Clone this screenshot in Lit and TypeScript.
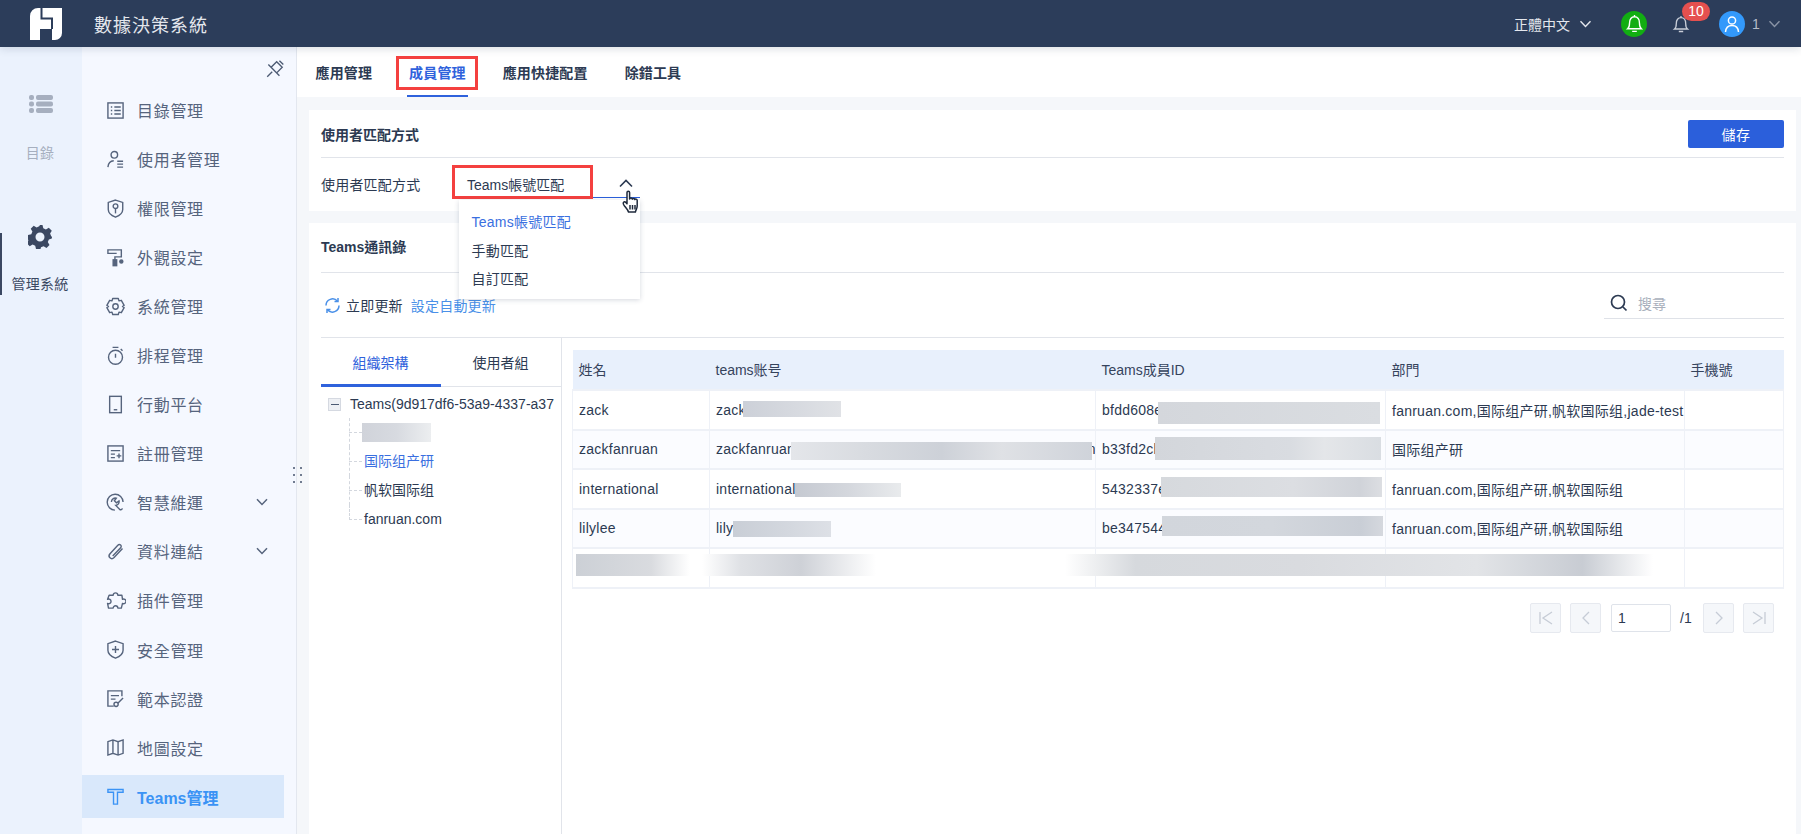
import { LitElement, css, html, svg } from 'lit';
import { customElement } from 'lit/decorators.js';

const navIcons: Record<string, unknown> = {
  list: svg`<rect x="2.5" y="2.5" width="13" height="13"/><path d="M5 6h1.2M8 6h5.5M5 9h1.2M8 9h5.5M5 12h1.2M8 12h5.5"/>`,
  user: svg`<circle cx="8" cy="5" r="2.8"/><path d="M2.5 15.5c.3-3.2 2.2-5.2 5-5.4M10.5 10.5h5M10.5 13h5M10.5 15.5h5"/>`,
  shield: svg`<path d="M9 1.8l6.2 2v6c0 3.2-2.8 5.2-6.2 6.6-3.4-1.4-6.2-3.4-6.2-6.6v-6z"/><circle cx="9" cy="7" r="2"/><path d="M9 9v4.2"/>`,
  paint: svg`<path d="M10 5.5H2.5v-3h11.5v6H8.5V11"/><rect x="7" y="11" width="3" height="5" fill="currentColor"/><circle cx="14" cy="12.5" r="1.3" fill="currentColor"/>`,
  gear: svg`<path stroke-linejoin="round" d="M6.6 2.2h4.8l.6 2 2-.5 2.4 4.3-1.4 1 1.4 1-2.4 4.3-2-.5-.6 2H6.6l-.6-2-2 .5L1.6 10 3 9 1.6 8 4 3.7l2 .5z"/><circle cx="9" cy="9" r="2.3"/>`,
  timer: svg`<circle cx="9" cy="10.5" r="6"/><path d="M9 7.5v3.5M6.5 2h5M13.5 3.5l1.5 1.5"/>`,
  phone: svg`<rect x="4" y="2" width="10" height="14"/><path d="M7.5 13.5h3"/>`,
  register: svg`<rect x="2.5" y="2.5" width="13" height="13"/><path d="M5 6.5h8M5 9.5h3.5M5 12.5h3.5M12 9v4M10 11h4"/>`,
  wrench: svg`<path d="M15.5 8.5A6.8 6.8 0 1 0 8.5 15.5"/><path d="M5.5 8.5a3.4 3.4 0 0 1 4.2-3.2L8 7.5l1.8 1.8 2.2-1.7a3.2 3.2 0 0 1-2.8 3.9l3.5 3.5c.6.6 2 0 2.2-1"/>`,
  clip: svg`<path d="M15 6.5l-7.2 7.7c-2.5 2.4-5.8-.7-3.5-3.3L11 3.6c1.6-1.6 3.9.6 2.4 2.2l-6.8 7"/>`,
  plugin: svg`<path d="M7 4.5a2 2 0 1 1 4 0h3.5l.5 3.5a2 2 0 1 1 0 3.5l-1 4H11a2 2 0 1 0-4 0H3l-.8-4a2 2 0 1 0 0-3.5L3.5 4.5z" stroke-linejoin="round"/>`,
  secure: svg`<path d="M9 1.8l6.5 2.2v5.6c0 3.4-2.8 5.4-6.5 6.8-3.7-1.4-6.5-3.4-6.5-6.8V4z"/><path d="M9 6v6M6 9h6"/>`,
  cert: svg`<path d="M14.5 7V2.5h-12v13h5M5 6.5h7M5 9.5h4"/><circle cx="9.5" cy="14" r="1.8"/><path d="M11 13l4.5-4.5"/>`,
  map: svg`<path d="M2.5 4l4.3-1.5 4.4 1.5 4.3-1.5v11.5l-4.3 1.5-4.4-1.5-4.3 1.5zM6.8 2.5v11.5M11.2 4v11.5"/>`,
  teams: svg`<path d="M2.5 3h13v2.4H10.7V15.5H7.3V5.4H2.5z"/>`,
};

const navItems = [
  { icon: 'list', label: '目錄管理' },
  { icon: 'user', label: '使用者管理' },
  { icon: 'shield', label: '權限管理' },
  { icon: 'paint', label: '外觀設定' },
  { icon: 'gear', label: '系統管理' },
  { icon: 'timer', label: '排程管理' },
  { icon: 'phone', label: '行動平台' },
  { icon: 'register', label: '註冊管理' },
  { icon: 'wrench', label: '智慧維運', more: true },
  { icon: 'clip', label: '資料連結', more: true },
  { icon: 'plugin', label: '插件管理' },
  { icon: 'secure', label: '安全管理' },
  { icon: 'cert', label: '範本認證' },
  { icon: 'map', label: '地圖設定' },
  { icon: 'teams', label: 'Teams管理', active: true },
];

const rows = [
  ['zack', 'zack0123456789', 'bfdd608e012345678901234567', 'fanruan.com,国际组产研,帆软国际组,jade-test'],
  ['zackfanruan', 'zackfanruan' + 'n'.repeat(36) + 'in', 'b33fd2cb012345678901234567', '国际组产研'],
  ['international', 'international', '5432337e012345678901234567', 'fanruan.com,国际组产研,帆软国际组'],
  ['lilylee', 'lily0123456789', 'be347544012345678901234567', 'fanruan.com,国际组产研,帆软国际组'],
  ['', '', '', ''],
];

// blurred-out patches over the table, relative to the table's top left corner
const patches = [
  { x: 171, y: 51, w: 98, h: 16, bg: 'linear-gradient(90deg,#ccd0d8,#d6d9df 50%,#e0e2e6)' },
  { x: 219, y: 92, w: 301, h: 18, bg: 'linear-gradient(90deg,#e4e6ea,#d8dbe0 25%,#cdd1d8 50%,#dfe1e5 70%,#cfd3da)' },
  { x: 223, y: 133, w: 106, h: 14, bg: 'linear-gradient(90deg,#c5c9d1,#d4d7dd 50%,#e9ebed)' },
  { x: 161, y: 171, w: 98, h: 16, bg: 'linear-gradient(90deg,#c9ced6,#d4d8df 60%,#dde0e6)' },
  { x: 586, y: 52, w: 222, h: 22, bg: 'linear-gradient(90deg,#d4d7dc,#dadde1)' },
  { x: 583, y: 87, w: 226, h: 23, bg: 'linear-gradient(90deg,#d3d6db,#d9dce1 60%,#e4e6e9 75%,#d9dde2)' },
  { x: 589, y: 127, w: 221, h: 20, bg: 'linear-gradient(90deg,#d6d9dd,#dcdee2 60%,#d0d3d9 90%,#dcdee2)' },
  { x: 590, y: 166, w: 221, h: 20, bg: 'linear-gradient(90deg,#d2d6dc,#d3d7dd 50%,#c9ced6 90%,#d5d8de)' },
  { x: 4, y: 204, w: 300, h: 22, bg: 'linear-gradient(90deg,#ccd0d6,#d9dbdf 25%,#fff 38%,#fff 42%,#dfe1e5 55%,#ced1d7 75%,#fff)' },
  { x: 493, y: 204, w: 588, h: 22, bg: 'linear-gradient(90deg,#fff,#d6d9dd 12%,#d9dbdf 40%,#e2e4e7 70%,#c8ccd3 88%,#fff)' },
];

@customElement('app-root')
export class AppRoot extends LitElement {
  static override styles = css`
    :host {
      display: block;
      height: 834px;
      overflow: hidden;
      font-family: 'Liberation Sans', 'Noto Sans CJK TC', sans-serif;
      font-size: 14px;
      color: #2c3a52;
    }
    svg {
      display: block;
      flex: none;
      fill: none;
      stroke: currentColor;
    }
    .topbar {
      position: relative;
      z-index: 3;
      height: 47px;
      display: flex;
      align-items: center;
      background: #2c3d5a;
      color: #e4e7ed;
      padding: 0 20px 0 30px;
      box-shadow: 0 2px 8px rgba(44, 61, 90, 0.16);
    }
    .logo {
      width: 32px;
      height: 32px;
      stroke: none;
    }
    .title {
      margin-left: 32px;
      font-size: 18px;
      letter-spacing: 1px;
    }
    .spacer {
      flex: 1;
    }
    .chev {
      width: 13px;
      height: 8px;
      stroke-width: 1.4;
      margin-left: 9px;
    }
    .green {
      width: 26px;
      height: 26px;
      border-radius: 50%;
      background: #12ae12;
      color: #fff;
      margin-left: 29px;
      display: flex;
      align-items: center;
      justify-content: center;
    }
    .bell {
      position: relative;
      margin-left: 25px;
      width: 17px;
      color: #c9ced8;
    }
    .badge {
      position: absolute;
      left: 10px;
      top: -13px;
      width: 28px;
      height: 19px;
      border-radius: 10px;
      background: #e5504f;
      color: #fff;
      font-size: 14px;
      line-height: 19px;
      text-align: center;
    }
    .avatar {
      width: 26px;
      height: 26px;
      border-radius: 50%;
      background: #3399fb;
      color: #fff;
      margin-left: 30px;
      display: flex;
      align-items: center;
      justify-content: center;
    }
    .uid {
      margin-left: 7px;
      width: 8px;
      color: #b4bbc8;
    }
    .uchev {
      margin-left: 8px;
      color: #8a94a6;
    }

    .layout {
      display: flex;
      height: 787px;
    }
    .rail {
      width: 82px;
      flex: none;
      background: #ebf2fd;
      display: flex;
      flex-direction: column;
      align-items: center;
    }
    .rail-item {
      position: relative;
      width: 100%;
      display: flex;
      flex-direction: column;
      align-items: center;
      line-height: 20px;
      letter-spacing: 0.2px;
    }
    .rail-item.dir {
      margin-top: 48px;
      color: #a6afbf;
    }
    .rail-item.dir span {
      margin-top: 30px;
      margin-right: 2px;
    }
    .rail-item.admin {
      margin-top: 62px;
      color: #3b4862;
    }
    .rail-item.admin svg {
      margin-right: 2px;
    }
    .rail-item.admin span {
      margin-top: 25px;
      margin-right: 2px;
    }
    .rail-item.admin::before {
      content: '';
      position: absolute;
      left: 0;
      top: 8px;
      width: 2px;
      height: 62px;
      background: #3b4862;
    }
    .nav {
      position: relative;
      width: 215px;
      flex: none;
      box-sizing: border-box;
      background: #f5f8ff;
      border-right: 1px solid #e3e7ef;
      color: #56647d;
      padding-right: 12px;
    }
    .pin {
      height: 41.5px;
      display: flex;
      justify-content: flex-end;
      align-items: flex-end;
      color: #4c5a73;
      box-sizing: border-box;
    }
    .pin svg {
      margin: 0 -1px 10px 0;
    }
    .nav-item {
      height: 43px;
      margin-bottom: 6.05px;
      display: flex;
      align-items: center;
      padding: 0 15px 0 22.5px;
      font-size: 16px;
      letter-spacing: 0.7px;
    }
    .nav-item svg.ic {
      margin-right: 11.5px;
      stroke-width: 1.2;
    }
    .nav-item .more {
      margin: 0 0 0 auto;
      width: 14px;
      height: 8px;
      stroke-width: 1.5;
    }
    .nav-item.active {
      background: #d9e8fb;
      color: #3b93f5;
      font-weight: 700;
      letter-spacing: 0;
    }
    .grip {
      position: absolute;
      left: 211px;
      top: 420px;
      display: grid;
      grid-template-columns: 2px 2px;
      column-gap: 5px;
      row-gap: 5px;
    }
    .grip i {
      width: 2px;
      height: 2px;
      border-radius: 50%;
      background: #45536c;
    }

    .main {
      flex: 1;
      min-width: 0;
      background: #f5f7fa;
      display: flex;
      flex-direction: column;
    }
    .tabs {
      height: 50px;
      flex: none;
      background: #fff;
      display: flex;
      gap: 33px;
      padding-left: 16.5px;
    }
    .tab {
      position: relative;
      padding: 0 2px;
      line-height: 52px;
      font-weight: 700;
      letter-spacing: 0.15px;
      color: #2c3a52;
    }
    .tab.on {
      color: #2f62dc;
    }
    .tab.on::after {
      content: '';
      position: absolute;
      left: 0;
      right: 0;
      bottom: 0;
      height: 2px;
      background: #2f62dc;
    }
    .mark {
      position: absolute;
      box-sizing: border-box;
      border: 3px solid #f4403f;
      pointer-events: none;
    }
    .tab .mark {
      left: -11px;
      top: 9px;
      width: 82px;
      height: 34px;
    }
    .cards {
      flex: 1;
      min-height: 0;
      padding: 13px 5px 0 12px;
      display: flex;
      flex-direction: column;
      gap: 12px;
    }
    .card {
      background: #fff;
      padding: 0 12px;
    }
    .card.fill {
      flex: 1;
      min-height: 0;
      overflow: hidden;
    }
    .card-head {
      height: 48px;
      box-sizing: border-box;
      display: flex;
      align-items: center;
      justify-content: space-between;
      border-bottom: 1px solid #e1e4ea;
      font-weight: 700;
    }
    .card-head.small {
      height: 50px;
      padding-bottom: 3px;
    }
    .save {
      width: 96px;
      height: 28px;
      border: none;
      border-radius: 2px;
      background: #2b5fdb;
      color: #fff;
      font: inherit;
      font-weight: 400;
      letter-spacing: 0.6px;
    }
    .match {
      height: 53px;
      display: flex;
      align-items: flex-start;
      padding-top: 7px;
      box-sizing: border-box;
    }
    .match label {
      width: 131px;
      line-height: 40px;
      letter-spacing: 0.2px;
    }
    .select {
      position: relative;
      z-index: 2;
      width: 188px;
      height: 33px;
      box-sizing: border-box;
      border-bottom: 1.5px solid #2b5fdb;
      padding-left: 15px;
      line-height: 40px;
    }
    .select .mark {
      left: 0;
      top: 0;
      width: 141px;
      height: 34px;
    }
    .select .mask {
      position: absolute;
      left: 0;
      bottom: -2px;
      width: 141px;
      height: 3px;
      background: #fff;
    }
    .select .up {
      position: absolute;
      left: 167px;
      top: 14px;
      width: 14px;
      height: 9px;
      stroke-width: 1.6;
    }
    .select .hand {
      position: absolute;
      left: 170px;
      top: 25px;
      stroke: #1f2a3c;
    }
    .menu {
      position: absolute;
      left: 7px;
      top: 35px;
      width: 181px;
      height: 99px;
      box-sizing: border-box;
      background: #fff;
      box-shadow: 0 1px 5px rgba(44, 61, 90, 0.2);
      padding-top: 8px;
      line-height: 28.7px;
      letter-spacing: 0.25px;
    }
    .menu div {
      padding-left: 12.5px;
    }
    .menu .sel {
      color: #3a6fe0;
    }
    .toolbar {
      height: 65px;
      box-sizing: border-box;
      display: flex;
      align-items: center;
      border-bottom: 1px solid #e1e4ea;
    }
    .refresh {
      margin-left: 3px;
      color: #4a90e8;
      stroke-width: 1.5;
    }
    .update {
      margin-left: 5px;
      letter-spacing: 0.2px;
    }
    .auto {
      margin-left: 8px;
      color: #4a90e8;
      letter-spacing: 0.2px;
    }
    .search {
      margin-left: auto;
      width: 180px;
      height: 28px;
      box-sizing: border-box;
      border-bottom: 1px solid #dfe2e8;
      display: flex;
      align-items: center;
      padding: 0 0 4px 6px;
      color: #a9b0bc;
    }
    .search svg {
      color: #2c3a52;
      margin-right: 10px;
      stroke-width: 1.7;
    }
    .split {
      display: flex;
      height: 496px;
    }
    .side {
      width: 240px;
      flex: none;
      border-right: 1px solid #e1e4ea;
    }
    .side-tabs {
      display: flex;
      height: 49px;
      box-sizing: border-box;
      border-bottom: 1px solid #e1e4ea;
    }
    .side-tabs div {
      flex: 1;
      text-align: center;
      line-height: 50px;
      margin-bottom: -1px;
      padding-right: 1px;
    }
    .side-tabs .on {
      color: #2f62dc;
      border-bottom: 3px solid #2f62dc;
    }
    .root {
      height: 31px;
      display: flex;
      align-items: center;
      padding: 3px 0 0 7px;
      box-sizing: border-box;
      white-space: nowrap;
      overflow: hidden;
    }
    .box {
      width: 13px;
      height: 13px;
      flex: none;
      box-sizing: border-box;
      border: 1px solid #d5d9e1;
      background: #eef0f4;
      margin-right: 9px;
      display: flex;
      align-items: center;
      justify-content: center;
    }
    .box i {
      width: 8px;
      height: 1px;
      background: #4c5a73;
    }
    .node {
      position: relative;
      height: 29px;
      box-sizing: border-box;
      line-height: 29px;
      margin-left: 28px;
      padding-left: 15px;
    }
    .node.hidden-name {
      padding: 5px 0 0 16px;
    }
    .node::before {
      content: '';
      position: absolute;
      left: 0;
      top: 14px;
      width: 13px;
      border-top: 1px dashed #d3d7de;
    }
    .node::after {
      content: '';
      position: absolute;
      left: 0;
      top: 0;
      height: 100%;
      border-left: 1px dashed #d3d7de;
    }
    .node:last-child::after {
      height: 50%;
    }
    .node.sel {
      color: #3a6fe0;
    }
    .blur {
      display: block;
      width: 69px;
      height: 19px;
      margin-left: -3px;
      background: linear-gradient(90deg, #d0d3da, #d7dae0 50%, #eceef0);
    }
    .right {
      flex: 1;
      min-width: 0;
      padding: 12px 0 0 10px;
    }
    .table-wrap {
      position: relative;
    }
    table {
      width: 100%;
      table-layout: fixed;
      border-collapse: collapse;
    }
    th {
      height: 37px;
      background: #e8f0fc;
      font-weight: 400;
      text-align: left;
      padding: 0 0 2px 6px;
      color: #35435c;
    }
    td {
      height: 39.5px;
      box-sizing: border-box;
      padding: 0 0 0 6px;
      overflow: hidden;
      white-space: nowrap;
      letter-spacing: 0.25px;
      border: 1px solid #eef1f7;
      border-width: 2.5px 1px;
      background: #fff;
    }
    tr:nth-child(even) td {
      background: #fbfcff;
    }
    .patch {
      position: absolute;
    }
    .pager {
      display: flex;
      justify-content: flex-end;
      align-items: center;
      gap: 9px;
      margin-top: 14px;
      padding-right: 10px;
    }
    .pg {
      width: 31px;
      height: 30px;
      box-sizing: border-box;
      background: #f5f7fa;
      border: 1px solid #e6e9ef;
      border-radius: 2px;
      color: #c6ccd6;
      display: flex;
      align-items: center;
      justify-content: center;
    }
    .pg svg {
      stroke-width: 1.3;
    }
    .page-input {
      width: 60px;
      height: 28px;
      box-sizing: border-box;
      border: 1px solid #dfe3ea;
      border-radius: 2px;
      padding-left: 6px;
      line-height: 26px;
      margin-left: 1px;
    }
    .total {
      width: 14px;
    }
  `;

  private chev(cls: string) {
    return html`<svg class=${cls} viewBox="0 0 12 8"><path d="M1 1.2l5 5.2 5-5.2" /></svg>`;
  }

  private bell(size: number) {
    return html`<svg width=${size} height=${size} viewBox="0 0 16 18" stroke-width="1.3">
      <path d="M1.5 14h13c-1.5-1.2-1.8-3-1.8-5.5C12.7 5 11 2.6 8 2.6S3.3 5 3.3 8.5C3.3 11 3 12.8 1.5 14z" />
      <path d="M8 1v1.6M5.8 16.5h4.4" />
    </svg>`;
  }

  private pageIcon(d: string) {
    return html`<svg width="18" height="18" viewBox="0 0 18 18"><path d=${d} /></svg>`;
  }

  override render() {
    return html`
      <div class="topbar">
        <svg class="logo" viewBox="0 0 32 32">
          <path
            fill="#fff"
            fill-rule="evenodd"
            d="M8 0H32V25a7 7 0 0 1-7 7H22V21H10V32H0V8A8 8 0 0 1 8 0z"
          />
          <path d="M11.5 0V10.5H22V21" fill="none" stroke="#2c3d5a" stroke-width="2" />
        </svg>
        <span class="title">數據決策系統</span>
        <span class="spacer"></span>
        <span>正體中文</span>
        ${this.chev('chev')}
        <span class="green">${this.bell(19)}</span>
        <span class="bell">
          ${this.bell(18)}
          <span class="badge">10</span>
        </span>
        <span class="avatar">
          <svg width="20" height="20" viewBox="0 0 20 20" stroke-width="1.5">
            <circle cx="10" cy="6.5" r="3.6" />
            <path d="M3.5 18c.3-4.2 2.8-6.5 6.5-6.5s6.2 2.3 6.5 6.5" />
          </svg>
        </span>
        <span class="uid">1</span>
        ${this.chev('chev uchev')}
      </div>

      <div class="layout">
        <div class="rail">
          <div class="rail-item dir">
            <svg width="24" height="18" viewBox="0 0 24 18" style="fill:currentColor;stroke:none">
              <rect x="0" y="0" width="5" height="5" rx="2" />
              <rect x="7" y="0" width="17" height="5" rx="2" />
              <rect x="0" y="6.5" width="5" height="5" rx="2" />
              <rect x="7" y="6.5" width="17" height="5" rx="2" />
              <rect x="0" y="13" width="5" height="5" rx="2" />
              <rect x="7" y="13" width="17" height="5" rx="2" />
            </svg>
            <span>目錄</span>
          </div>
          <div class="rail-item admin">
            <svg width="24" height="24" viewBox="0 0 24 24" style="fill:currentColor;stroke:none">
              <path
                fill-rule="evenodd"
                d="M14.5 0l.8 3.3 2.6 1.1 2.9-1.7 3 3-1.7 2.9 1 2.4L24 12l-.2 1.5-2.9.9-1.1 2.6 1.7 2.9-3 3-2.9-1.7-2.6 1.1-.5 1.7h-4.5l-.8-3.3-2.6-1.1-2.9 1.7-3-3 1.7-2.9-1.1-2.6L0 14V10l3.3-.8 1.1-2.6L2.7 3.7l3-3 2.9 1.7 2.6-1.1L12 0zM12 7.5a4.5 4.5 0 1 0 0 9 4.5 4.5 0 0 0 0-9z"
              />
            </svg>
            <span>管理系統</span>
          </div>
        </div>

        <div class="nav">
          <div class="pin">
            <svg width="20" height="20" viewBox="0 0 18 18" stroke-width="1.2">
              <path d="M5.5 7.5l5-5 5 5-5 5zM3 5l10 10M2 16l4.5-4.5M13 1.5l3.5 3.5" />
            </svg>
          </div>
          ${navItems.map(
            (item) => html`
              <div class="nav-item ${item.active ? 'active' : ''}">
                <svg class="ic" width="21" height="21" viewBox="0 0 18 18">${navIcons[item.icon]}</svg>
                <span>${item.label}</span>
                ${item.more ? this.chev('more') : ''}
              </div>
            `,
          )}
          <div class="grip">
            ${[0, 1, 2, 3, 4, 5].map(() => html`<i></i>`)}
          </div>
        </div>

        <div class="main">
          <div class="tabs">
            <div class="tab">應用管理</div>
            <div class="tab on">成員管理<span class="mark"></span></div>
            <div class="tab">應用快捷配置</div>
            <div class="tab">除錯工具</div>
          </div>
          <div class="cards">
            <div class="card">
              <div class="card-head">
                <span>使用者匹配方式</span>
                <button class="save">儲存</button>
              </div>
              <div class="match">
                <label>使用者匹配方式</label>
                <div class="select">
                  Teams帳號匹配
                  <span class="mask"></span>
                  <span class="mark"></span>
                  <svg class="up" viewBox="0 0 14 9"><path d="M1 7.5l6-6 6 6" /></svg>
                  <div class="menu">
                    <div class="sel">Teams帳號匹配</div>
                    <div>手動匹配</div>
                    <div>自訂匹配</div>
                  </div>
                  <svg class="hand" width="18" height="24" viewBox="0 0 18 24" stroke-width="1.5">
                    <path
                      fill="#fff"
                      stroke-linejoin="round"
                      d="M5 2.5c0-1.8 2.6-1.8 2.6 0V9c.4-1.4 2.6-1.2 2.7.2.5-1.2 2.4-1 2.5.4.6-1 2.4-.6 2.4 1V16c0 2.5-1.4 4-1.8 6H6.5C6 20 4.5 18.5 2.5 16 1 14 .8 12.6 2 12c1-.5 2 .4 3 1.8z"
                    />
                    <path d="M8 15v4.5M10.5 15v4.5M13 15v4.5" />
                  </svg>
                </div>
              </div>
            </div>

            <div class="card fill">
              <div class="card-head small"><span>Teams通訊錄</span></div>
              <div class="toolbar">
                <svg class="refresh" width="17" height="17" viewBox="0 0 17 17">
                  <path d="M2 8.5A6.5 6.5 0 0 1 13.5 4.3M15 8.5A6.5 6.5 0 0 1 3.5 12.7" />
                  <path d="M14 1v3.5h-3.5M3 16v-3.5h3.5" />
                </svg>
                <span class="update">立即更新</span>
                <span class="auto">設定自動更新</span>
                <div class="search">
                  <svg width="18" height="18" viewBox="0 0 18 18">
                    <circle cx="8" cy="8" r="6.5" />
                    <path d="M13 13l3.5 3.5" />
                  </svg>
                  搜尋
                </div>
              </div>
              <div class="split">
                <div class="side">
                  <div class="side-tabs">
                    <div class="on">組織架構</div>
                    <div>使用者組</div>
                  </div>
                  <div class="root">
                    <span class="box"><i></i></span>
                    Teams(9d917df6-53a9-4337-a37
                  </div>
                  <div class="node hidden-name"><span class="blur"></span></div>
                  <div class="node sel">国际组产研</div>
                  <div class="node">帆软国际组</div>
                  <div class="node">fanruan.com</div>
                </div>
                <div class="right">
                  <div class="table-wrap">
                    <table>
                      <colgroup>
                        <col style="width:137px" />
                        <col style="width:386px" />
                        <col style="width:290px" />
                        <col style="width:299px" />
                        <col />
                      </colgroup>
                      <thead>
                        <tr>
                          <th>姓名</th>
                          <th>teams账号</th>
                          <th>Teams成員ID</th>
                          <th>部門</th>
                          <th>手機號</th>
                        </tr>
                      </thead>
                      <tbody>
                        ${rows.map(
                          (row) => html`
                            <tr>
                              ${row.map((cell) => html`<td>${cell}</td>`)}
                              <td></td>
                            </tr>
                          `,
                        )}
                      </tbody>
                    </table>
                    ${patches.map(
                      (p) => html`<span
                        class="patch"
                        style="left:${p.x}px;top:${p.y}px;width:${p.w}px;height:${p.h}px;background:${p.bg}"
                      ></span>`,
                    )}
                  </div>
                  <div class="pager">
                    <div class="pg">${this.pageIcon('M3 3v12M15 3L6 9l9 6')}</div>
                    <div class="pg">${this.pageIcon('M12 3L6 9l6 6')}</div>
                    <div class="page-input">1</div>
                    <div class="total">/1</div>
                    <div class="pg">${this.pageIcon('M6 3l6 6-6 6')}</div>
                    <div class="pg">${this.pageIcon('M3 3l9 6-9 6M15 3v12')}</div>
                  </div>
                </div>
              </div>
            </div>
          </div>
        </div>
      </div>
    `;
  }
}
